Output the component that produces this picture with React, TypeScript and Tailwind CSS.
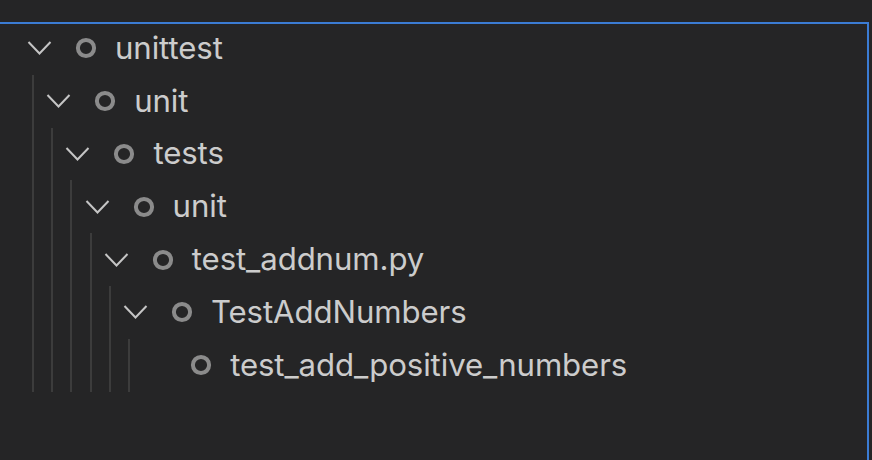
type TreeNode = {
  label: string
  level: number
  expandable: boolean
}

const rows: TreeNode[] = [
  { label: "unittest", level: 0, expandable: true },
  { label: "unit", level: 1, expandable: true },
  { label: "tests", level: 2, expandable: true },
  { label: "unit", level: 3, expandable: true },
  { label: "test_addnum.py", level: 4, expandable: true },
  { label: "TestAddNumbers", level: 5, expandable: true },
  { label: "test_add_positive_numbers", level: 6, expandable: false },
]

function Chevron() {
  return (
    <svg width="26" height="16" viewBox="0 0 26 16" fill="none">
      <polyline
        points="1.5,2 12.5,13.5 23.5,2"
        stroke="#c5c5c5"
        strokeWidth="2"
        strokeLinejoin="miter"
      />
    </svg>
  )
}

function StatusCircle() {
  return (
    <svg width="22" height="22" viewBox="0 0 22 22" fill="none">
      <circle cx="11" cy="11" r="8.1" stroke="#8b8b8b" strokeWidth="4" />
    </svg>
  )
}

function IndentGuide() {
  return (
    <div className="flex h-full w-[19.2px] shrink-0">
      <div className="ml-[8px] h-full w-[2px] bg-[#3c3c3c]" />
    </div>
  )
}

function TreeRow({ node }: { node: TreeNode }) {
  return (
    <div className="flex h-[52.8px] items-center pl-[26px]">
      {Array.from({ length: node.level }).map((_, i) => (
        <IndentGuide key={i} />
      ))}
      <div className="flex w-[32px] shrink-0 items-center justify-center">
        {node.expandable && <Chevron />}
      </div>
      <div className="ml-[19px] flex w-[22px] shrink-0 items-center justify-center">
        <StatusCircle />
      </div>
      <span className="ml-[18px] whitespace-nowrap text-[31.2px] leading-none tracking-[-0.1px] text-[#cccccc]">
        {node.label}
      </span>
    </div>
  )
}

export default function App() {
  return (
    <div
      className="h-[460px] w-[872px] overflow-hidden bg-[#252526]"
      style={{ fontFamily: "Inter, 'Noto Sans', sans-serif" }}
    >
      <div className="-ml-[2px] mt-[22px] h-[480px] w-[871px] outline-2 -outline-offset-2 outline-[#3b7cd4]">
        {rows.map((node, i) => (
          <TreeRow key={i} node={node} />
        ))}
      </div>
    </div>
  )
}
